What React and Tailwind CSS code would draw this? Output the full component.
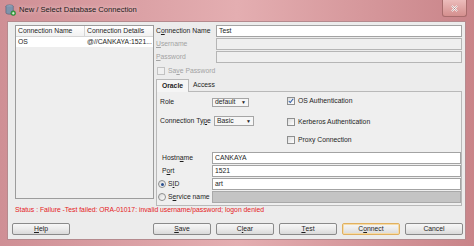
import React from "react";

const Field = ({ value = "", disabled = false, dark = false }) => (
  <div
    className={`flex-1 h-full border flex items-center pl-[2px] ${
      dark
        ? "bg-[#c4c4c4] border-[#a9a9a9]"
        : disabled
        ? "bg-[#efefef] border-[#b5b5b5]"
        : "bg-white border-[#a3a3a3]"
    }`}
  >
    {value}
  </div>
);

const Check = ({ checked = false, disabled = false }) => (
  <div
    className={`w-[8px] h-[8px] border flex items-center justify-center ${
      disabled ? "border-[#c2c2c2] bg-[#f0f0f0]" : "border-[#8e8f8f] bg-gradient-to-br from-[#dcdcdc] to-white"
    }`}
  >
    {checked && (
      <svg viewBox="0 0 8 8" className="w-[6px] h-[6px]">
        <path d="M1 4l2 2 4-5" fill="none" stroke="#2a5aa8" strokeWidth="1.4" />
      </svg>
    )}
  </div>
);

const Radio = ({ checked = false }) => (
  <div className="w-[8px] h-[8px] rounded-full border border-[#8e8f8f] bg-gradient-to-br from-[#d8d8d8] to-white flex items-center justify-center">
    {checked && <div className="w-[3px] h-[3px] rounded-full bg-[#2a4f8f]" />}
  </div>
);

const Select = ({ value, width }) => (
  <div className={`${width} h-full border border-[#a5a5a5] bg-[#f6f6f6] flex items-center justify-between px-[2px]`}>
    <span>{value}</span>
    <span className="text-[5px] leading-none">▼</span>
  </div>
);

const Button = ({ children, active = false }) => (
  <div
    className={`w-[58px] h-[12px] rounded-[2px] border flex items-center justify-center bg-gradient-to-b from-[#f7f7f7] via-[#ebebeb] to-[#d9d9d9] ${
      active ? "border-[#e0b060] shadow-[inset_0_0_0_1px_#f6dca8]" : "border-[#8a8a8a]"
    }`}
  >
    {children}
  </div>
);

const U = ({ children }) => <span className="underline underline-offset-1">{children}</span>;

const App = () => {
  return (
    <div className="w-[474px] h-[246px] flex flex-col bg-gradient-to-r from-[#cf8f95] via-[#e4aeb1] to-[#c98489] font-['Liberation_Sans',Arial,sans-serif] text-[6.8px] text-[#1e1e1e] overflow-hidden">
      {/* title bar */}
      <div className="h-[21px] flex items-start relative">
        <div className="flex items-center pl-[5px] pt-[4px] gap-[3px]">
          <svg viewBox="0 0 12 13" className="w-[11px] h-[12px]">
            <ellipse cx="5" cy="2.5" rx="4" ry="1.6" fill="#9fb0c4" stroke="#4a5a70" strokeWidth="0.6" />
            <path d="M1 2.5v7c0 0.9 1.8 1.6 4 1.6s4-0.7 4-1.6v-7" fill="#7f93ab" stroke="#4a5a70" strokeWidth="0.6" />
            <circle cx="9" cy="10" r="2.6" fill="#3aa843" stroke="#1f6e27" strokeWidth="0.5" />
            <path d="M9 8.6v2.8M7.6 10h2.8" stroke="white" strokeWidth="0.8" />
          </svg>
          <span className="text-[7.6px] text-[#1a1a1a] [text-shadow:0_0_4px_#f6dcdc]">New / Select Database Connection</span>
        </div>
        <div className="ml-auto mr-[7px] w-[25px] h-[17px] rounded-b-[3px] border border-t-0 border-[#a86c6c] bg-gradient-to-b from-[#ecbcbb] to-[#d48f8e] flex items-center justify-center">
          <svg viewBox="0 0 8 8" className="w-[7px] h-[7px]">
            <path d="M1 1l6 6M7 1l-6 6" stroke="white" strokeWidth="1.8" />
            <path d="M1 1l6 6M7 1l-6 6" stroke="#7a4a4a" strokeWidth="0.5" />
          </svg>
        </div>
      </div>

      {/* client area */}
      <div className="flex-1 ml-[7px] mr-[8px] mb-[6px] bg-[#ececec] border border-[#b58a8e] flex flex-col">
        <div className="flex pt-[3px]">
          {/* connection list */}
          <div className="ml-[7px] w-[139px] h-[174px] border border-[#9c9c9c] bg-[#eeeeee] flex flex-col">
            <div className="h-[11px] flex bg-gradient-to-b from-white to-[#f1f1f1] border-b border-[#d6d6d6]">
              <div className="w-[69px] pl-[2px] flex items-center border-r border-[#d6d6d6]">Connection Name</div>
              <div className="flex-1 pl-[2px] flex items-center">Connection Details</div>
            </div>
            <div className="h-[10px] flex bg-white">
              <div className="w-[69px] pl-[2px] flex items-center">OS</div>
              <div className="flex-1 pl-[2px] flex items-center">@//CANKAYA:1521...</div>
            </div>
          </div>

          {/* connection form */}
          <div className="ml-[2px] w-[306px] flex flex-col">
            <div className="flex flex-col gap-[1px]">
              <div className="h-[12px] flex items-center">
                <div className="w-[60px]">C<U>o</U>nnection Name</div>
                <Field value="Test" />
              </div>
              <div className="h-[12px] flex items-center text-[#a3a3a3]">
                <div className="w-[60px]"><U>U</U>sername</div>
                <Field disabled />
              </div>
              <div className="h-[12px] flex items-center text-[#a3a3a3]">
                <div className="w-[60px]"><U>P</U>assword</div>
                <Field disabled />
              </div>
            </div>
            <div className="mt-[3px] h-[10px] flex items-center gap-[3px] text-[#a3a3a3] pl-[1px]">
              <Check disabled />
              <span>Sa<U>v</U>e Password</span>
            </div>
            <div className="mt-[2px] h-[13px] flex items-end">
              <div className="w-[33px] h-[13px] border border-b-0 border-[#b9b9b9] bg-[#f5f5f5] flex items-center justify-center font-bold relative z-10 -mb-px">
                Oracle
              </div>
              <div className="h-[11px] flex items-center ml-[4px]">Access</div>
            </div>
            <div className="h-[115px] border border-[#b9b9b9] bg-[#efefef] flex flex-col">
              <div className="h-[56px] flex">
                <div className="w-[130px] pl-[3px] flex flex-col">
                  <div className="mt-[6px] h-[9px] flex items-center">
                    <div className="w-[52px]">Role</div>
                    <Select value="default" width="w-[37px]" />
                  </div>
                  <div className="mt-[9px] h-[10px] flex items-center">
                    <div className="w-[54px]">Connection Ty<U>p</U>e</div>
                    <Select value="Basic" width="w-[40px]" />
                  </div>
                </div>
                <div className="flex flex-col">
                  <div className="mt-[5px] h-[8px] flex items-center gap-[3px]">
                    <Check checked />
                    <span>OS Authentication</span>
                  </div>
                  <div className="mt-[13px] h-[8px] flex items-center gap-[3px]">
                    <Check />
                    <span>Kerberos Authentication</span>
                  </div>
                  <div className="mt-[10px] h-[8px] flex items-center gap-[3px]">
                    <Check />
                    <span>Proxy Connection</span>
                  </div>
                </div>
              </div>
              <div className="mt-[4px] flex flex-col gap-[1px]">
                <div className="h-[12px] flex items-center">
                  <div className="w-[55px] pl-[5px]">Hostn<U>a</U>me</div>
                  <Field value="CANKAYA" />
                </div>
                <div className="h-[12px] flex items-center">
                  <div className="w-[55px] pl-[5px]">P<U>o</U>rt</div>
                  <Field value="1521" />
                </div>
                <div className="h-[12px] flex items-center">
                  <div className="w-[55px] flex items-center gap-[2px] pl-[1px]">
                    <Radio checked />
                    <span>S<U>I</U>D</span>
                  </div>
                  <Field value="art" />
                </div>
                <div className="h-[12px] flex items-center">
                  <div className="w-[55px] flex items-center gap-[2px] pl-[1px]">
                    <Radio />
                    <span>S<U>e</U>rvice name</span>
                  </div>
                  <Field dark />
                </div>
              </div>
            </div>
          </div>
        </div>

        <div className="h-[9px] pl-[7px] flex items-center text-[#e5201c]">
          Status : Failure -Test failed: ORA-01017: invalid username/password; logon denied
        </div>

        <div className="mt-[8px] flex items-center pl-[4px]">
          <Button><U>H</U>elp</Button>
          <div className="ml-auto mr-[2px] flex gap-[5px]">
            <Button><U>S</U>ave</Button>
            <Button>C<U>l</U>ear</Button>
            <Button><U>T</U>est</Button>
            <Button active>C<U>o</U>nnect</Button>
            <Button>Cancel</Button>
          </div>
        </div>
      </div>
    </div>
  );
};

export default App;
